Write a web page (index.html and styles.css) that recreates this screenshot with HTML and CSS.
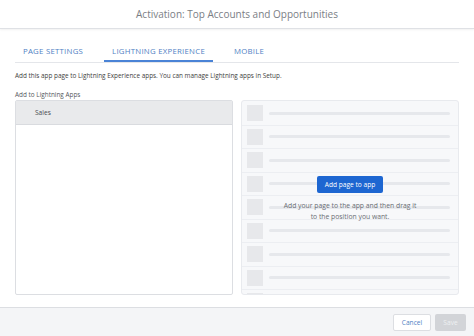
FILE: index.html
```html
<!DOCTYPE html>
<html>
<head>
    <meta charset="utf-8">
    <title>Activation</title>
    <link rel="stylesheet" href="styles.css">
</head>
<body>
<div class="modal">
    <div class="modal-header">Activation: Top Accounts and Opportunities</div>

    <div class="modal-body">
        <ul class="tabs">
            <li class="tab">Page Settings</li>
            <li class="tab active">Lightning Experience</li>
            <li class="tab">Mobile</li>
        </ul>

        <p class="desc">Add this app page to Lightning Experience apps. You can manage Lightning apps in Setup.</p>
        <p class="label">Add to Lightning Apps</p>

        <div class="columns">
            <div class="app-list">
                <div class="app-row">Sales</div>
            </div>

            <div class="preview">
                <div class="row"><span class="sq"></span><span class="bar"></span></div>
                <div class="row"><span class="sq"></span><span class="bar"></span></div>
                <div class="row"><span class="sq"></span><span class="bar"></span></div>
                <div class="row"><span class="sq"></span><span class="bar"></span></div>
                <div class="row"><span class="sq"></span><span class="bar"></span></div>
                <div class="row"><span class="sq"></span><span class="bar"></span></div>
                <div class="row"><span class="sq"></span><span class="bar"></span></div>
                <div class="row"><span class="sq"></span><span class="bar"></span></div>
                <div class="row"><span class="sq"></span><span class="bar"></span></div>

                <div class="overlay">
                    <button class="btn-add">Add page to app</button>
                    <p class="hint">Add your page to the app and then drag it<br>to the position you want.</p>
                </div>
            </div>
        </div>
    </div>

    <div class="modal-footer">
        <button class="btn btn-cancel">Cancel</button>
        <button class="btn btn-save">Save</button>
    </div>
</div>
</body>
</html>
```

FILE: styles.css
```css
*
{
  margin: 0;
  padding: 0;
  box-sizing: border-box;
}

body
{
  font-family: 'Open Sans', sans-serif;
  background: #fff;
  color: #3e3e3c;
  width: 474px;
  height: 336px;
  overflow: hidden;
}

.modal
{
  display: flex;
  flex-direction: column;
  height: 336px;
}

.modal-header
{
  height: 29px;
  line-height: 28px;
  text-align: center;
  font-size: 10px;
  color: #7a7e85;
  border-bottom: 1px solid #dfe1e5;
  box-shadow: 0 1px 2px rgba(0,0,0,0.06);
}

.modal-body
{
  flex: 1;
  padding: 13px 15px 0 15px;
}

.tabs
{
  list-style: none;
  display: flex;
  gap: 13px;
  border-bottom: 1px solid #e4e6ea;
  height: 21px;
}

.tab
{
  padding: 0 8px;
  font-size: 7.8px;
  letter-spacing: 0.25px;
  text-transform: uppercase;
  color: #4f7fc4;
  line-height: 19px;
}

.tab.active
{
  border-bottom: 2px solid #4a83d6;
}

.desc
{
  font-size: 6.4px;
  margin-top: 8px;
  line-height: 10px;
}

.label
{
  font-size: 6.4px;
  margin-top: 9px;
  line-height: 10px;
  color: #55585c;
}

.columns
{
  display: grid;
  grid-template-columns: 218px 218px;
  gap: 8px;
  margin-top: 0;
  height: 195px;
}

.app-list
{
  border: 1px solid #dcdee2;
  border-radius: 2px;
  background: #fff;
}

.app-row
{
  height: 24px;
  line-height: 23px;
  padding-left: 19px;
  background: #e9eaec;
  border-bottom: 1px solid #d9dbdf;
  font-size: 6.6px;
  color: #4a4d52;
}

.preview
{
  position: relative;
  border: 1px solid #e8eaee;
  border-radius: 3px;
  background: #f7f8fa;
  overflow: hidden;
  padding-top: 1px;
}

.row
{
  display: flex;
  align-items: center;
  height: 23.5px;
  padding: 0 8px 0 5px;
  border-bottom: 1px solid #eceef2;
}

.sq
{
  width: 16px;
  height: 16px;
  background: #e7e8eb;
}

.bar
{
  flex: 1;
  height: 3px;
  margin-left: 6px;
  background: #e6e8ec;
  border-radius: 2px;
}

.overlay
{
  position: absolute;
  left: 0;
  right: 0;
  top: 75px;
  display: flex;
  flex-direction: column;
  align-items: center;
}

.btn-add
{
  width: 66px;
  height: 17px;
  border: 0;
  border-radius: 2px;
  background: #1d66d1;
  color: #fff;
  font-family: 'Open Sans', sans-serif;
  font-size: 6.6px;
}

.hint
{
  margin-top: 8px;
  text-align: center;
  font-size: 6.8px;
  line-height: 10.5px;
  color: #6a6e74;
}

.modal-footer
{
  height: 29px;
  background: #f4f5f7;
  border-top: 1px solid #dcdee2;
  display: flex;
  justify-content: flex-end;
  align-items: center;
  gap: 4px;
  padding-right: 8px;
}

.btn
{
  height: 17px;
  border-radius: 2px;
  font-family: 'Open Sans', sans-serif;
  font-size: 6.6px;
}

.btn-cancel
{
  width: 38px;
  background: #fff;
  border: 1px solid #dcdee2;
  color: #4f7fc4;
}

.btn-save
{
  width: 31px;
  background: #d2d4d8;
  border: 0;
  color: #eef0f2;
}
```
